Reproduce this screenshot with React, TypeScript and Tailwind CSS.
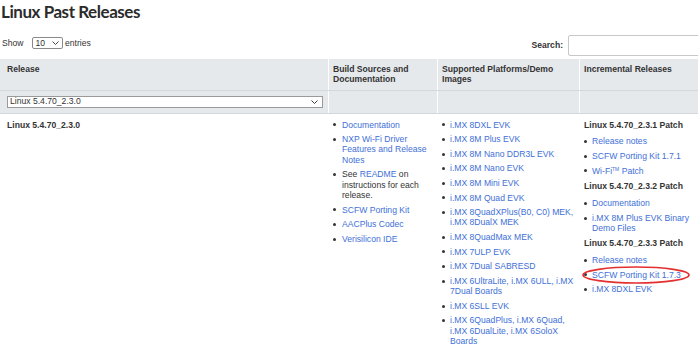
import React from "react"

const platforms = [
  "i.MX 8DXL EVK",
  "i.MX 8M Plus EVK",
  "i.MX 8M Nano DDR3L EVK",
  "i.MX 8M Nano EVK",
  "i.MX 8M Mini EVK",
  "i.MX 8M Quad EVK",
  "i.MX 8QuadXPlus(B0, C0) MEK, i.MX 8DualX MEK",
  "i.MX 8QuadMax MEK",
  "i.MX 7ULP EVK",
  "i.MX 7Dual SABRESD",
  "i.MX 6UltraLite, i.MX 6ULL, i.MX 7Dual Boards",
  "i.MX 6SLL EVK",
  "i.MX 6QuadPlus, i.MX 6Quad, i.MX 6DualLite, i.MX 6SoloX Boards",
]

const link = "text-[#4170d8]"

function Chevron() {
  return (
    <svg width="7" height="4" viewBox="0 0 7 4" className="shrink-0">
      <polyline points="0.5,0.5 3.5,3.5 6.5,0.5" fill="none" stroke="#444" strokeWidth="1" />
    </svg>
  )
}

function Item({ children, gutter = "w-2", className = "" }: { children: React.ReactNode; gutter?: string; className?: string }) {
  return (
    <li className={`flex mb-[4.3px] ${className}`}>
      <span className={`${gutter} shrink-0 pt-[3.8px]`}>
        <span className="block w-[3px] h-[3px] rounded-full bg-[#333]" />
      </span>
      <span>{children}</span>
    </li>
  )
}

export default function App() {
  return (
    <div className="w-[698px] h-[352px] overflow-hidden bg-white text-[#333] font-['Liberation_Sans',Arial,sans-serif] text-[8.6px] leading-[10.3px]">
      <h1 className="pl-[1px] pt-[1.4px] font-['Lato',sans-serif] font-bold text-[17px] leading-[22px] tracking-[-0.45px] text-[#2b2b2b]">
        Linux Past Releases
      </h1>

      {/* length + search controls */}
      <div className="mt-[11.6px] w-[709px] flex justify-between items-start">
        <div className="pl-[2px] mt-[2px] flex items-center h-[12px]">
          <span>Show</span>
          <div className="ml-[8px] w-[31px] h-[12px] border border-[#8a8a8a] rounded-[2px] flex items-center justify-between px-[3px] bg-white">
            <span>10</span>
            <Chevron />
          </div>
          <span className="ml-[2.5px]">entries</span>
        </div>
        <div className="flex items-center gap-[5px]">
          <span className="font-bold">Search:</span>
          <div className="w-[141px] h-[21px] border border-[#c8c8c8] rounded-[2px] bg-white" />
        </div>
      </div>

      {/* table */}
      <div className="mt-[3px] w-[709px]">
        <div className="grid grid-cols-[328px_109px_142px_130px] bg-[#e6e9ec] border-b border-[#d4d8dc] font-bold">
          <div className="pl-[7px] pt-[5px] pb-[5px]">Release</div>
          <div className="border-l border-white pl-[4px] pr-[5px] pt-[5px] pb-[5px]">Build Sources and Documentation</div>
          <div className="border-l border-white pl-[4px] pr-[5px] pt-[5px] pb-[5px]">Supported Platforms/Demo Images</div>
          <div className="border-l border-white pl-[4px] pr-[5px] pt-[5px] pb-[5px]">Incremental Releases</div>
        </div>

        <div className="grid grid-cols-[328px_109px_142px_130px] bg-[#e6e9ec] border-b border-[#d4d8dc] h-[23px]">
          <div className="pl-[7px] pr-[5px] pt-[5px]">
            <div className="h-[12px] border border-[#9a9a9a] bg-white flex items-center justify-between pl-[2px] pr-[4px]">
              <span>Linux 5.4.70_2.3.0</span>
              <Chevron />
            </div>
          </div>
          <div className="border-l border-white" />
          <div className="border-l border-white" />
          <div className="border-l border-white" />
        </div>

        <div className="grid grid-cols-[328px_109px_142px_130px]">
          <div className="pl-[7px] pt-[6px] font-bold">Linux 5.4.70_2.3.0</div>

          <div className="border-l border-white pl-[4px] pr-[5px] pt-[6px]">
            <ul>
              <Item gutter="w-[9px]"><a className={link}>Documentation</a></Item>
              <Item gutter="w-[9px]"><a className={link}>NXP Wi-Fi Driver Features and Release Notes</a></Item>
              <Item gutter="w-[9px]">
                <span>See <a className={link}>README</a> on instructions for each release.</span>
              </Item>
              <Item gutter="w-[9px]"><a className={link}>SCFW Porting Kit</a></Item>
              <Item gutter="w-[9px]"><a className={link}>AACPlus Codec</a></Item>
              <Item gutter="w-[9px]"><a className={link}>Verisilicon IDE</a></Item>
            </ul>
          </div>

          <div className="border-l border-white pl-[4px] pr-[5px] pt-[6px]">
            <ul>
              {platforms.map((p) => (
                <Item key={p}><a className={link}>{p}</a></Item>
              ))}
            </ul>
          </div>

          <div className="border-l border-white pl-[4px] pr-[5px] pt-[6px]">
            <p className="font-bold mb-[6.6px]">Linux 5.4.70_2.3.1 Patch</p>
            <ul className="mb-[2.4px]">
              <Item><a className={link}>Release notes</a></Item>
              <Item><a className={link}>SCFW Porting Kit 1.7.1</a></Item>
              <Item>
                <a className={link}>
                  Wi-Fi<span className="relative top-[-3px] text-[5px]">TM</span> Patch
                </a>
              </Item>
            </ul>
            <p className="font-bold mb-[6.8px]">Linux 5.4.70_2.3.2 Patch</p>
            <ul className="mb-[2.6px]">
              <Item><a className={link}>Documentation</a></Item>
              <Item><a className={link}>i.MX 8M Plus EVK Binary Demo Files</a></Item>
            </ul>
            <p className="font-bold mb-[6.8px]">Linux 5.4.70_2.3.3 Patch</p>
            <ul>
              <Item><a className={link}>Release notes</a></Item>
              <Item className="relative">
                <a className={link}>SCFW Porting Kit 1.7.3</a>
                <svg className="absolute left-[-2px] top-[-4px] w-[108px] h-[18px] overflow-visible" viewBox="0 0 108 18">
                  <ellipse cx="54" cy="9" rx="53" ry="8" fill="none" stroke="#e3302f" strokeWidth="1.6" />
                </svg>
              </Item>
              <Item><a className={link}>i.MX 8DXL EVK</a></Item>
            </ul>
          </div>
        </div>
      </div>
    </div>
  )
}
